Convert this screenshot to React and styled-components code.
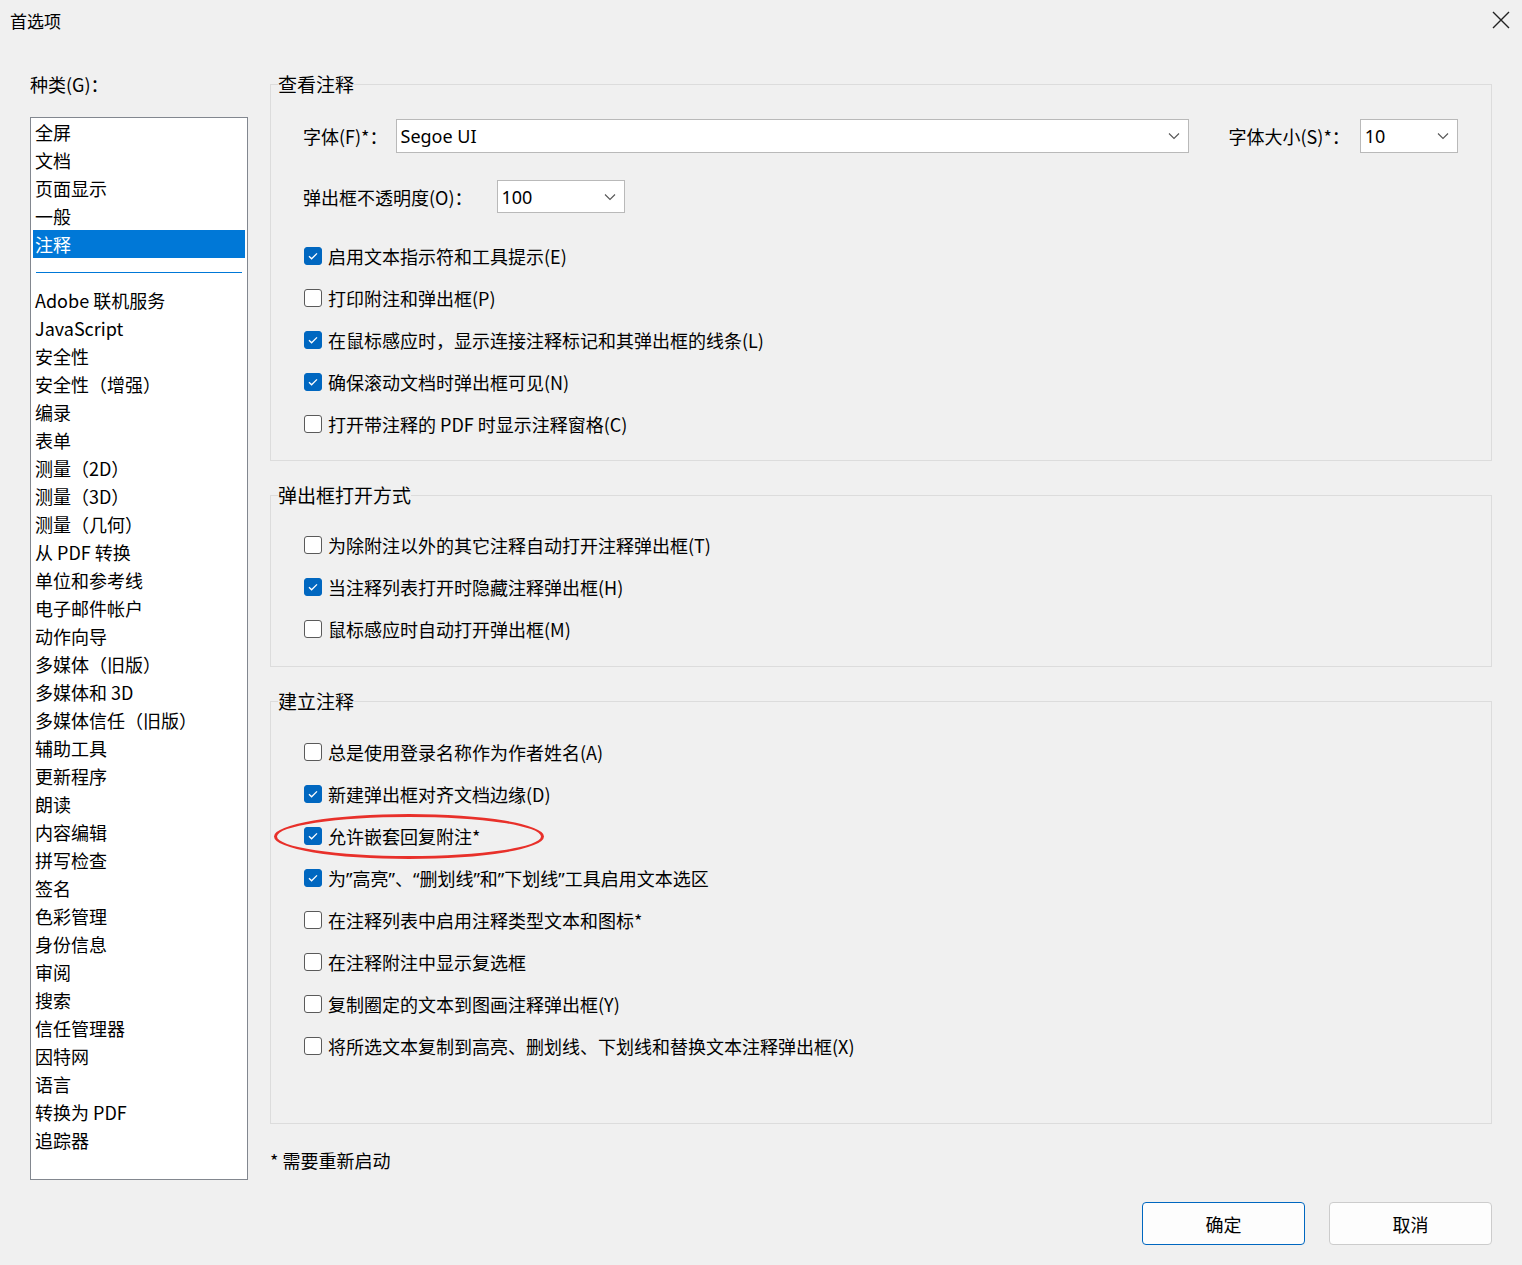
import React from "react";
import styled, { createGlobalStyle } from "styled-components";

const Global = createGlobalStyle`
  html, body { margin: 0; background: #f0f0f0; }
  body { font-family: "Noto Sans CJK SC", "Noto Sans", sans-serif; color: #000; }
`;

const Win = styled.div`
  width: 1522px; height: 1265px; background: #f0f0f0; box-sizing: border-box;
  display: flex; flex-direction: column;
`;
const TitleBar = styled.div`
  height: 40px; display: flex; align-items: center; justify-content: space-between;
  padding: 0 12px 0 10px; font-size: 17px;
`;
const Main = styled.div`
  margin-top: 32px; display: grid; grid-template-columns: 218px 1222px; column-gap: 22px;
  padding-left: 30px;
`;
const LeftCol = styled.div` display: flex; flex-direction: column; `;
const Label = styled.div` font-size: 18px; line-height: 24px; `;
const List = styled.div`
  margin-top: 21px; height: 1063px; background: #fff; border: 1px solid #82878f;
  box-sizing: border-box; font-size: 18px;
`;
const Item = styled.div`
  height: 28px; line-height: 28px; padding-left: 2px; margin: 0 2px;
  background: ${p => (p.$sel ? "#0078d7" : "transparent")};
  color: ${p => (p.$sel ? "#fff" : "#000")};
  white-space: nowrap;
`;
const Sep = styled.div`
  height: 28px; display: flex; align-items: center; padding: 0 5px;
  &::after { content: ""; flex: 1; height: 1px; background: #0078d7; }
`;
const RightCol = styled.div` display: flex; flex-direction: column; `;
const Group = styled.fieldset`
  margin: 0 0 ${p => p.$mb}px; border: 1px solid #dcdcdc; border-radius: 0;
  padding: ${p => p.$pt}px 0 ${p => p.$pb}px 32px; min-width: 0;
  display: flex; flex-direction: column;
`;
const Legend = styled.legend`
  font-size: 19px; line-height: 24px; padding: 0; margin-left: -25px;
  background: #f0f0f0;
`;
const FormRow = styled.div`
  display: flex; align-items: center; font-size: 18px; height: ${p => p.$h}px;
  margin-bottom: ${p => p.$mb || 0}px;
`;
const Select = styled.div`
  width: ${p => p.$w}px; height: ${p => p.$h}px; box-sizing: border-box; background: #fff;
  border: 1px solid #b9b9b9; display: flex; align-items: center; justify-content: space-between;
  padding: 0 8px 0 4px; font-family: "Noto Sans", "Noto Sans CJK SC", sans-serif; font-size: 18px;
  margin-left: ${p => p.$ml}px;
`;
const Check = styled.div`
  height: 42px; display: flex; align-items: center; font-size: 18px; position: relative; gap: 6px;
  margin-left: 1px;
  font-family: ${p => (p.$latin ? '"Noto Sans", "Noto Sans CJK SC", sans-serif' : "inherit")};
`;
const Box = styled.span`
  width: 18px; height: 18px; box-sizing: border-box; border-radius: 3px;
  background: ${p => (p.$on ? "#0067c0" : "#fff")};
  border: 1px solid ${p => (p.$on ? "#0067c0" : "#5a5a5a")};
  display: inline-flex; align-items: center; justify-content: center;
`;
const Ellipse = styled.div`
  position: absolute; left: -30px; top: -1px; width: 270px; height: 45px;
  border: 3.5px solid #e8302a; border-radius: 50%; box-sizing: border-box; pointer-events: none;
`;
const Note = styled.div` margin-top: 24px; font-size: 18px; line-height: 24px; `;
const Footer = styled.div`
  margin-top: 22px; display: flex; justify-content: flex-end; gap: 24px; padding-right: 30px;
`;
const Btn = styled.button`
  width: 163px; height: 43px; background: #fdfdfd; border-radius: 4px; font-size: 18px;
  font-family: "Noto Sans CJK SC", sans-serif; color: #000;
  border: 1px solid ${p => (p.$primary ? "#0067c0" : "#cccccc")};
`;

const Chev = () => (
  <svg width="12" height="8" viewBox="0 0 12 8"><path d="M1 1.5 6 6.5 11 1.5" fill="none" stroke="#555" strokeWidth="1.1" /></svg>
);

const CB = ({ on, children, mark, latin }) => (
  <Check $latin={latin}>
    {mark && <Ellipse />}
    <Box $on={on}>
      {on && <svg width="12" height="10" viewBox="0 0 12 10"><path d="M2 5.2 4.6 7.8 10 2.4" fill="none" stroke="#fff" strokeWidth="1.3" /></svg>}
    </Box>
    <span>{children}</span>
  </Check>
);

const top = ["全屏", "文档", "页面显示", "一般", "注释"];
const rest = ["Adobe 联机服务", "JavaScript", "安全性", "安全性（增强）", "编录", "表单", "测量（2D）", "测量（3D）", "测量（几何）", "从 PDF 转换", "单位和参考线", "电子邮件帐户", "动作向导", "多媒体（旧版）", "多媒体和 3D", "多媒体信任（旧版）", "辅助工具", "更新程序", "朗读", "内容编辑", "拼写检查", "签名", "色彩管理", "身份信息", "审阅", "搜索", "信任管理器", "因特网", "语言", "转换为 PDF", "追踪器"];

export default function App() {
  return (
    <Win>
      <Global />
      <TitleBar>
        <span>首选项</span>
        <svg width="18" height="18" viewBox="0 0 18 18"><path d="M1 1 17 17M17 1 1 17" stroke="#222" strokeWidth="1.4" /></svg>
      </TitleBar>
      <Main>
        <LeftCol>
          <Label>种类(G)：</Label>
          <List>
            {top.map(t => <Item key={t} $sel={t === "注释"}>{t}</Item>)}
            <Sep />
            {rest.map(t => <Item key={t}>{t}</Item>)}
          </List>
        </LeftCol>
        <RightCol>
          <Group $pt={23} $pb={15} $mb={22}>
            <Legend>查看注释</Legend>
            <FormRow $h={34} $mb={27}>
              <span>字体(F)*：</span>
              <Select $w={793} $h={34} $ml={8}><span>Segoe UI</span><Chev /></Select>
              <span style={{ marginLeft: 40 }}>字体大小(S)*：</span>
              <Select $w={98} $h={34} $ml={10}><span>10</span><Chev /></Select>
            </FormRow>
            <FormRow $h={33} $mb={22}>
              <span>弹出框不透明度(O)：</span>
              <Select $w={128} $h={33} $ml={24}><span>100</span><Chev /></Select>
            </FormRow>
            <CB on>启用文本指示符和工具提示(E)</CB>
            <CB>打印附注和弹出框(P)</CB>
            <CB on>在鼠标感应时，显示连接注释标记和其弹出框的线条(L)</CB>
            <CB on>确保滚动文档时弹出框可见(N)</CB>
            <CB>打开带注释的 PDF 时显示注释窗格(C)</CB>
          </Group>
          <Group $pt={17} $pb={16} $mb={22}>
            <Legend>弹出框打开方式</Legend>
            <CB>为除附注以外的其它注释自动打开注释弹出框(T)</CB>
            <CB on>当注释列表打开时隐藏注释弹出框(H)</CB>
            <CB>鼠标感应时自动打开弹出框(M)</CB>
          </Group>
          <Group $pt={18} $pb={56} $mb={0}>
            <Legend>建立注释</Legend>
            <CB>总是使用登录名称作为作者姓名(A)</CB>
            <CB on>新建弹出框对齐文档边缘(D)</CB>
            <CB on mark>允许嵌套回复附注*</CB>
            <CB on latin>为”高亮”、“删划线”和”下划线”工具启用文本选区</CB>
            <CB>在注释列表中启用注释类型文本和图标*</CB>
            <CB>在注释附注中显示复选框</CB>
            <CB>复制圈定的文本到图画注释弹出框(Y)</CB>
            <CB>将所选文本复制到高亮、删划线、下划线和替换文本注释弹出框(X)</CB>
          </Group>
          <Note>* 需要重新启动</Note>
        </RightCol>
      </Main>
      <Footer>
        <Btn $primary>确定</Btn>
        <Btn>取消</Btn>
      </Footer>
    </Win>
  );
}
